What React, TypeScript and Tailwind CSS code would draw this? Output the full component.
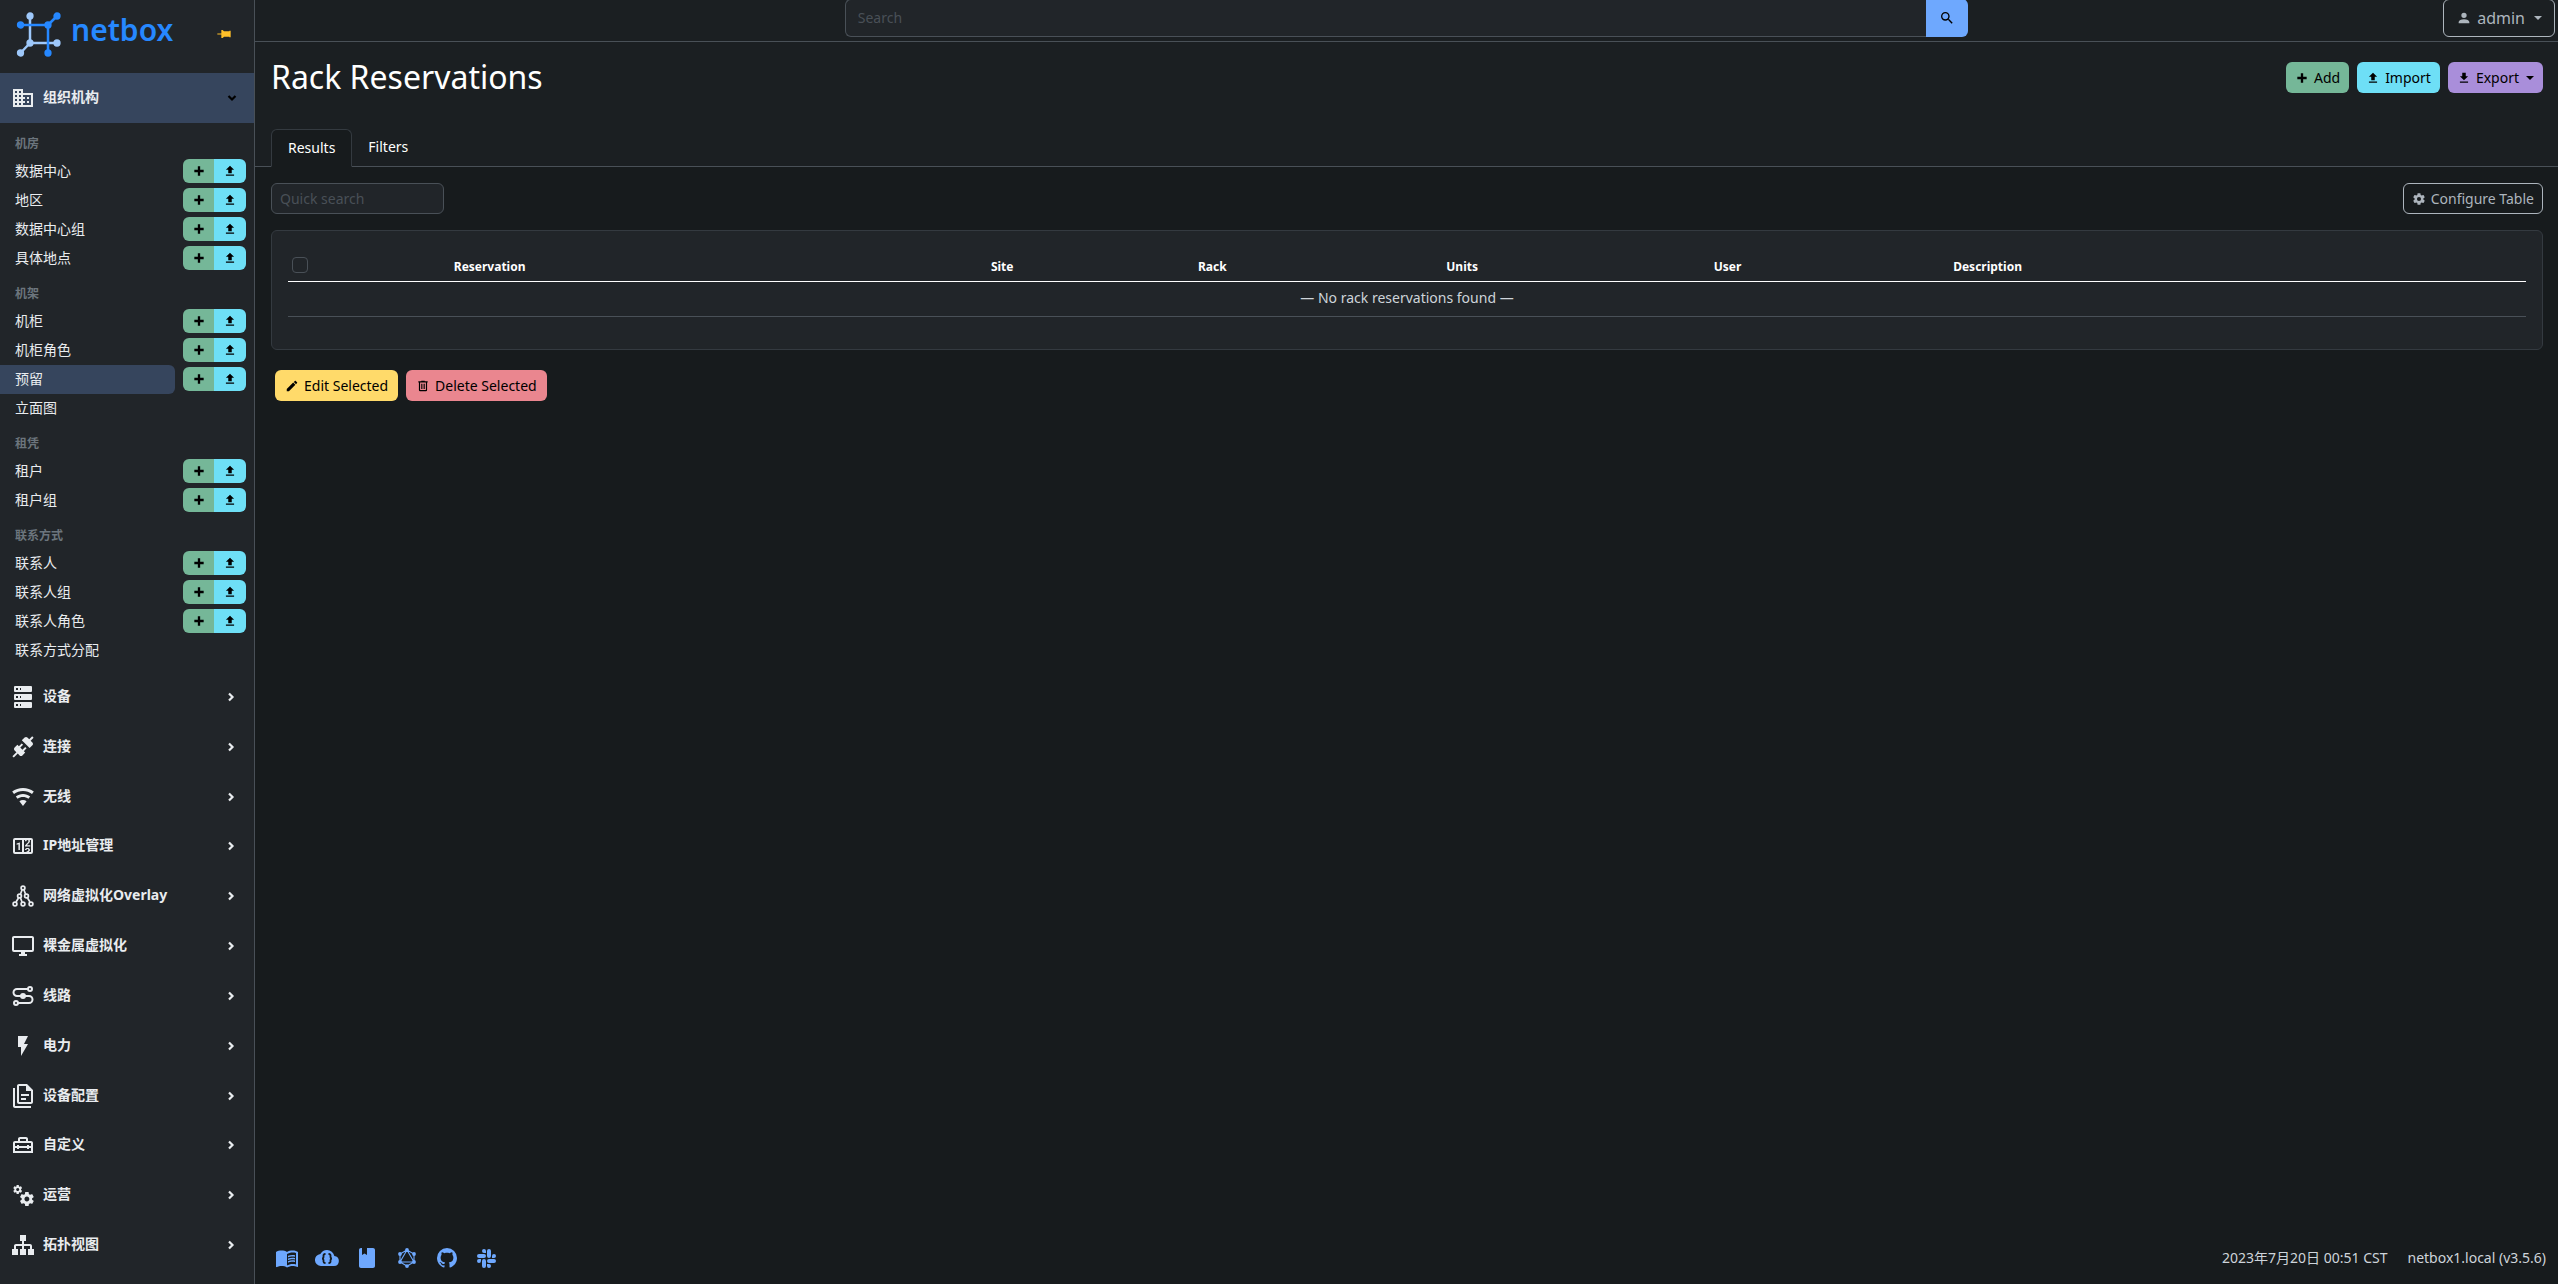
import React from 'react';
import { MdMenuBook } from 'react-icons/md';

const PATHS = {
  plus: 'M20 14H14V20H10V14H4V10H10V4H14V10H20V14Z',
  upload: 'M9,16V10H5L12,3L19,10H15V16H9M5,20V18H19V20H5Z',
  download: 'M5,20H19V18H5M19,9H15V3H9V9H5L12,16L19,9Z',
  account:
    'M12,4A4,4 0 0,1 16,8A4,4 0 0,1 12,12A4,4 0 0,1 8,8A4,4 0 0,1 12,4M12,14C16.42,14 20,15.79 20,18V20H4V18C4,15.79 7.58,14 12,14Z',
  magnify:
    'M9.5,3A6.5,6.5 0 0,1 16,9.5C16,11.11 15.41,12.59 14.44,13.73L14.71,14H15.5L20.5,19L19,20.5L14,15.5V14.71L13.73,14.44C12.59,15.41 11.11,16 9.5,16A6.5,6.5 0 0,1 3,9.5A6.5,6.5 0 0,1 9.5,3M9.5,5C7,5 5,7 5,9.5C5,12 7,14 9.5,14C12,14 14,12 14,9.5C14,7 12,5 9.5,5Z',
  cog: 'M12,15.5A3.5,3.5 0 0,1 8.5,12A3.5,3.5 0 0,1 12,8.5A3.5,3.5 0 0,1 15.5,12A3.5,3.5 0 0,1 12,15.5M19.43,12.97C19.47,12.65 19.5,12.33 19.5,12C19.5,11.67 19.47,11.34 19.43,11L21.54,9.37C21.73,9.22 21.78,8.95 21.66,8.73L19.66,5.27C19.54,5.05 19.27,4.96 19.05,5.05L16.56,6.05C16.04,5.66 15.5,5.32 14.87,5.07L14.5,2.42C14.46,2.18 14.25,2 14,2H10C9.75,2 9.54,2.18 9.5,2.42L9.13,5.07C8.5,5.32 7.96,5.66 7.44,6.05L4.95,5.05C4.73,4.96 4.46,5.05 4.34,5.27L2.34,8.73C2.21,8.95 2.27,9.22 2.46,9.37L4.57,11C4.53,11.34 4.5,11.67 4.5,12C4.5,12.33 4.53,12.65 4.57,12.97L2.46,14.63C2.27,14.78 2.21,15.05 2.34,15.27L4.34,18.73C4.46,18.95 4.73,19.03 4.95,18.95L7.44,17.94C7.96,18.34 8.5,18.68 9.13,18.93L9.5,21.58C9.54,21.82 9.75,22 10,22H14C14.25,22 14.46,21.82 14.5,21.58L14.87,18.93C15.5,18.67 16.04,18.34 16.56,17.94L19.05,18.95C19.27,19.03 19.54,18.95 19.66,18.73L21.66,15.27C21.78,15.05 21.73,14.78 21.54,14.63L19.43,12.97Z',
  pencil:
    'M20.71,7.04C21.1,6.65 21.1,6 20.71,5.63L18.37,3.29C18,2.9 17.35,2.9 16.96,3.29L15.12,5.12L18.87,8.87M3,17.25V21H6.75L17.81,9.93L14.06,6.18L3,17.25Z',
  trash:
    'M9,3V4H4V6H5V19A2,2 0 0,0 7,21H17A2,2 0 0,0 19,19V6H20V4H15V3H9M7,6H17V19H7V6M9,8V17H11V8H9M13,8V17H15V8H13Z',
  pin: 'M16,12V4H17V2H7V4H8V12L6,14V16H11.2V22H12.8V16H18V14L16,12Z',
  domain:
    'M18,15H16V17H18M18,11H16V13H18M20,19H12V17H14V15H12V13H14V11H12V9H20M10,7H8V5H10M10,11H8V9H10M10,15H8V13H10M10,19H8V17H10M6,7H4V5H6M6,11H4V9H6M6,15H4V13H6M6,19H4V17H6M12,7V3H2V21H22V7H12Z',
  server:
    'M4,1H20A1,1 0 0,1 21,2V6A1,1 0 0,1 20,7H4A1,1 0 0,1 3,6V2A1,1 0 0,1 4,1M4,9H20A1,1 0 0,1 21,10V14A1,1 0 0,1 20,15H4A1,1 0 0,1 3,14V10A1,1 0 0,1 4,9M4,17H20A1,1 0 0,1 21,18V22A1,1 0 0,1 20,23H4A1,1 0 0,1 3,22V18A1,1 0 0,1 4,17M9,5H10V3H9V5M9,13H10V11H9V13M9,21H10V19H9V21M5,3V5H7V3H5M5,11V13H7V11H5M5,19V21H7V19H5Z',
  connection:
    'M21.4 7.5C22.2 8.3 22.2 9.6 21.4 10.3L18.6 13.1L10.8 5.3L13.6 2.5C14.4 1.7 15.7 1.7 16.4 2.5L18.2 4.3L21.2 1.3L22.6 2.7L19.6 5.7L21.4 7.5M15.6 13.3L14.2 11.9L11.4 14.7L9.3 12.6L12.1 9.8L10.7 8.4L7.9 11.2L6.4 9.8L3.6 12.6C2.8 13.4 2.8 14.7 3.6 15.4L5.4 17.2L1.4 21.2L2.8 22.6L6.8 18.6L8.6 20.4C9.4 21.2 10.7 21.2 11.4 20.4L14.2 17.6L12.8 16.2L15.6 13.3Z',
  wifi: 'M12,21L15.6,16.2C14.6,15.45 13.35,15 12,15C10.65,15 9.4,15.45 8.4,16.2L12,21M12,3C7.95,3 4.21,4.34 1.2,6.6L3,9C5.5,7.12 8.62,6 12,6C15.38,6 18.5,7.12 21,9L22.8,6.6C19.79,4.34 16.05,3 12,3M12,9C9.3,9 6.81,9.89 4.8,11.4L6.6,13.8C8.1,12.67 9.97,12 12,12C14.03,12 15.9,12.67 17.4,13.8L19.2,11.4C17.19,9.89 14.7,9 12,9Z',
  counter:
    'M4,4H20A2,2 0 0,1 22,6V18A2,2 0 0,1 20,20H4A2,2 0 0,1 2,18V6A2,2 0 0,1 4,4M4,6V18H11V6H4M20,18V6H18.76C19,6.54 18.95,7.07 18.95,7.13C18.88,7.8 18.41,8.5 18.24,8.75L15.91,11.3L19.23,11.28L19.24,12.5L14.04,12.47L14,11.47C14,11.47 17.05,8.24 17.2,7.95C17.34,7.67 17.91,6 16.5,6C15.27,6.05 15.41,7.3 15.41,7.3L13.87,7.31C13.87,7.31 13.88,6.65 14.25,6H13V18H15.58L15.57,17.14L16.54,17.13C16.54,17.13 17.45,16.97 17.46,16.08C17.5,15.08 16.65,15.08 16.5,15.08C16.37,15.08 15.43,15.13 15.43,15.95H13.91C13.91,15.95 13.95,13.89 16.5,13.89C19.1,13.89 18.96,15.91 18.96,15.91C18.96,15.91 19,17.16 17.85,17.63L18.37,18H20M8.92,16H7.42V10.2L5.62,10.76V9.53L8.76,8.41H8.92V16Z',
  monitor:
    'M21,16H3V4H21M21,2H3C1.89,2 1,2.89 1,4V16A2,2 0 0,0 3,18H10V20H8V22H16V20H14V18H21A2,2 0 0,0 23,16V4C23,2.89 22.1,2 21,2Z',
  flash: 'M7,2V13H10V22L17,10H13L17,2H7Z',
  documents:
    'M16,0H8C6.9,0 6,0.9 6,2V18C6,19.1 6.9,20 8,20H20C21.1,20 22,19.1 22,18V6L16,0M20,18H8V2H15V7H20V18M4,4V22H20V24H4C2.9,24 2,23.1 2,22V4H4M10,10V12H18V10H10M10,14V16H15V14H10Z',
  toolbox:
    'M20,8H17V6C17,4.9 16.1,4 15,4H9C7.9,4 7,4.9 7,6V8H4C2.9,8 2,8.9 2,10V20H22V10C22,8.9 21.1,8 20,8M9,6H15V8H9V6M20,18H4V15H6V16H8V15H16V16H18V15H20V18M18,13V12H16V13H8V12H6V13H4V10H20V13H18Z',
  cogs: 'M15.9,18.45C17.25,18.45 18.35,17.35 18.35,16C18.35,14.65 17.25,13.55 15.9,13.55C14.54,13.55 13.45,14.65 13.45,16C13.45,17.35 14.54,18.45 15.9,18.45M21.1,16.68L22.58,17.84C22.71,17.95 22.75,18.13 22.66,18.29L21.26,20.71C21.17,20.86 21,20.92 20.83,20.86L19.09,20.16C18.73,20.44 18.33,20.67 17.91,20.85L17.64,22.7C17.62,22.87 17.47,23 17.3,23H14.5C14.32,23 14.18,22.87 14.15,22.7L13.89,20.85C13.46,20.67 13.07,20.44 12.71,20.16L10.96,20.86C10.81,20.92 10.62,20.86 10.54,20.71L9.14,18.29C9.05,18.13 9.09,17.95 9.22,17.84L10.7,16.68L10.65,16L10.7,15.31L9.22,14.16C9.09,14.05 9.05,13.86 9.14,13.71L10.54,11.29C10.62,11.13 10.81,11.07 10.96,11.13L12.71,11.84C13.07,11.56 13.46,11.32 13.89,11.15L14.15,9.29C14.18,9.13 14.32,9 14.5,9H17.3C17.47,9 17.62,9.13 17.64,9.29L17.91,11.15C18.33,11.32 18.73,11.56 19.09,11.84L20.83,11.13C21,11.07 21.17,11.13 21.26,11.29L22.66,13.71C22.75,13.86 22.71,14.05 22.58,14.16L21.1,15.31L21.15,16L21.1,16.68M6.69,8.07C7.56,8.07 8.26,7.37 8.26,6.5C8.26,5.63 7.56,4.92 6.69,4.92A1.58,1.58 0 0,0 5.11,6.5C5.11,7.37 5.82,8.07 6.69,8.07M10.03,6.94L11,7.68C11.07,7.75 11.09,7.87 11.03,7.97L10.13,9.53C10.08,9.63 9.96,9.67 9.86,9.63L8.74,9.18L8,9.62L7.81,10.81C7.79,10.92 7.7,11 7.59,11H5.79C5.67,11 5.58,10.92 5.56,10.81L5.4,9.62L4.64,9.18L3.52,9.63C3.41,9.67 3.3,9.63 3.24,9.53L2.34,7.97C2.28,7.87 2.31,7.75 2.39,7.68L3.34,6.94L3.31,6.5L3.34,6.06L2.39,5.32C2.31,5.25 2.28,5.13 2.34,5.03L3.24,3.47C3.3,3.37 3.41,3.33 3.52,3.37L4.63,3.82L5.4,3.38L5.56,2.19C5.58,2.08 5.67,2 5.79,2H7.59C7.7,2 7.79,2.08 7.81,2.19L8,3.38L8.74,3.82L9.86,3.37C9.96,3.33 10.08,3.37 10.13,3.47L11.03,5.03C11.09,5.13 11.07,5.25 11,5.32L10.03,6.06L10.06,6.5L10.03,6.94Z',
  sitemap:
    'M9,2V8H11V11H5C3.89,11 3,11.89 3,13V16H1V22H7V16H5V13H11V16H9V22H15V16H13V13H19V16H17V22H23V16H21V13C21,11.89 20.11,11 19,11H13V8H15V2H9Z',
  book: 'M6,2C4.9,2 4,2.9 4,4V20C4,21.1 4.9,22 6,22H18C19.1,22 20,21.1 20,20V4C20,2.9 19.1,2 18,2H12V9L9.5,7.5L7,9V2H6Z',
  github:
    'M12,2A10,10 0 0,0 2,12C2,16.42 4.87,20.17 8.84,21.5C9.34,21.58 9.5,21.27 9.5,21C9.5,20.77 9.5,20.14 9.5,19.31C6.73,19.91 6.14,17.97 6.14,17.97C5.68,16.81 5.03,16.5 5.03,16.5C4.12,15.88 5.1,15.9 5.1,15.9C6.1,15.97 6.63,16.93 6.63,16.93C7.5,18.45 8.97,18 9.54,17.76C9.63,17.11 9.89,16.67 10.17,16.42C7.95,16.17 5.62,15.31 5.62,11.5C5.62,10.39 6,9.5 6.65,8.79C6.55,8.54 6.2,7.5 6.75,6.15C6.75,6.15 7.59,5.88 9.5,7.17C10.29,6.95 11.15,6.84 12,6.84C12.85,6.84 13.71,6.95 14.5,7.17C16.41,5.88 17.25,6.15 17.25,6.15C17.8,7.5 17.45,8.54 17.35,8.79C18,9.5 18.38,10.39 18.38,11.5C18.38,15.32 16.04,16.16 13.81,16.41C14.17,16.72 14.5,17.33 14.5,18.26C14.5,19.6 14.5,20.68 14.5,21C14.5,21.27 14.66,21.59 15.17,21.5C19.14,20.16 22,16.42 22,12A10,10 0 0,0 12,2Z',
  slack:
    'M6,15A2,2 0 0,1 4,17A2,2 0 0,1 2,15A2,2 0 0,1 4,13H6V15M7,15A2,2 0 0,1 9,13A2,2 0 0,1 11,15V20A2,2 0 0,1 9,22A2,2 0 0,1 7,20V15M9,7A2,2 0 0,1 7,5A2,2 0 0,1 9,3A2,2 0 0,1 11,5V7H9M9,8A2,2 0 0,1 11,10A2,2 0 0,1 9,12H4A2,2 0 0,1 2,10A2,2 0 0,1 4,8H9M17,10A2,2 0 0,1 19,8A2,2 0 0,1 21,10A2,2 0 0,1 19,12H17V10M16,10A2,2 0 0,1 14,12A2,2 0 0,1 12,10V5A2,2 0 0,1 14,3A2,2 0 0,1 16,5V10M14,18A2,2 0 0,1 16,20A2,2 0 0,1 14,22A2,2 0 0,1 12,20V18H14M14,17A2,2 0 0,1 12,15A2,2 0 0,1 14,13H19A2,2 0 0,1 21,15A2,2 0 0,1 19,17H14Z',
};

type IconName = keyof typeof PATHS;

function Icon({ name, className }: { name: IconName; className: string }) {
  return (
    <svg viewBox="0 0 24 24" fill="currentColor" fillRule="evenodd" className={className} aria-hidden="true">
      <path d={PATHS[name]} />
    </svg>
  );
}

function GraphIcon() {
  return (
    <svg viewBox="0 0 24 24" fill="none" stroke="currentColor" strokeWidth="1.7" className="w-6 h-6" aria-hidden="true">
      <circle cx="12" cy="4" r="1.9" />
      <circle cx="8.5" cy="12" r="1.9" />
      <circle cx="15.5" cy="12" r="1.9" />
      <circle cx="4" cy="20" r="1.9" />
      <circle cx="12" cy="20" r="1.9" />
      <circle cx="20" cy="20" r="1.9" />
      <path d="M11 6L9.500 10M13 6l1.500 4M7.500 14l-2.500 4M9.500 14l1.500 4M16.500 14l2.500 4" />
    </svg>
  );
}

function CircuitIcon() {
  return (
    <svg viewBox="0 0 24 24" fill="none" stroke="currentColor" strokeWidth="2" className="w-6 h-6" aria-hidden="true">
      <circle cx="19" cy="5" r="2" />
      <circle cx="5" cy="19" r="2" />
      <path d="M17 5H6a3.5 3.5 0 0 0 0 7h12a3.5 3.5 0 0 1 0 7H7" />
      <circle cx="12" cy="12" r="3" fill="currentColor" stroke="none" />
    </svg>
  );
}

function CloudBracesIcon() {
  return (
    <svg viewBox="0 0 24 24" className="w-6 h-6" aria-hidden="true">
      <path
        fill="currentColor"
        d="M19.35 10.03A7.49 7.49 0 0 0 12 4C9.11 4 6.6 5.64 5.35 8.03A6 6 0 0 0 6 20h13a5 5 0 0 0 .35-9.97Z"
      />
      <path
        fill="none"
        stroke="#171b1d"
        strokeWidth="1.8"
        d="M10.500 8H10a1.500 1.500 0 0 0-1.500 1.500v1.500a1.500 1.500 0 0 1-1.500 1.500a1.500 1.500 0 0 1 1.500 1.500v1.500A1.500 1.500 0 0 0 10 17h.5M13.500 8h.5a1.500 1.500 0 0 1 1.500 1.500v1.500a1.500 1.500 0 0 0 1.500 1.500a1.500 1.500 0 0 0-1.500 1.500v1.500A1.500 1.500 0 0 1 14 17h-.5"
      />
    </svg>
  );
}

function GraphqlIcon() {
  return (
    <svg viewBox="0 0 24 24" fill="currentColor" className="w-6 h-6" aria-hidden="true">
      <path d="M12 4l7 4v8l-7 4l-7-4V8ZM12 4L5 16h14Z" fill="none" stroke="currentColor" strokeWidth="1.1" />
      <circle cx="12" cy="3.900" r="1.900" />
      <circle cx="19" cy="8" r="1.900" />
      <circle cx="19" cy="16" r="1.900" />
      <circle cx="12" cy="20.100" r="1.900" />
      <circle cx="5" cy="16" r="1.900" />
      <circle cx="5" cy="8" r="1.900" />
    </svg>
  );
}

function Chevron({ open }: { open?: boolean }) {
  return (
    <svg
      viewBox="0 0 16 16"
      fill="none"
      stroke="currentColor"
      strokeWidth="2.2"
      className={open ? 'w-4 h-4 rotate-90 text-black' : 'w-4 h-4'}
      aria-hidden="true"
    >
      <path d="M6 4.500L9.500 8L6 11.500" />
    </svg>
  );
}

function Caret() {
  return (
    <svg viewBox="0 0 8 4" fill="currentColor" className="w-2 h-1" aria-hidden="true">
      <path d="M0 0H8L4 4Z" />
    </svg>
  );
}

function Logo() {
  return (
    <a href="#home" className="flex items-center gap-[9px] text-[#2688ff]">
      <svg viewBox="0 0 46 46" className="w-[46px] h-[46px]" fill="none" strokeWidth="2.5" aria-hidden="true">
        <g stroke="#9ec8fa" fill="#9ec8fa">
          <path d="M14 5V32H41M14 32L4.500 42" fill="none" />
          <circle cx="14" cy="5" r="2.400" />
          <circle cx="41" cy="32" r="2.400" />
          <circle cx="4.500" cy="42" r="2.400" />
          <circle cx="14" cy="32" r="2.400" />
        </g>
        <g stroke="#2688ff" fill="#2688ff">
          <path d="M4.500 14H32V42M32 14L41 5" fill="none" />
          <circle cx="4.500" cy="14" r="2.400" />
          <circle cx="32" cy="14" r="2.400" />
          <circle cx="41" cy="5" r="2.400" />
          <circle cx="32" cy="42" r="2.400" />
        </g>
      </svg>
      <span className="text-[30px] leading-8 font-semibold pb-2">netbox</span>
    </a>
  );
}

type Link = { label: string; actions?: boolean; active?: boolean };

const GROUPS: { title: string; links: Link[] }[] = [
  {
    title: '机房',
    links: [
      { label: '数据中心', actions: true },
      { label: '地区', actions: true },
      { label: '数据中心组', actions: true },
      { label: '具体地点', actions: true },
    ],
  },
  {
    title: '机架',
    links: [
      { label: '机柜', actions: true },
      { label: '机柜角色', actions: true },
      { label: '预留', actions: true, active: true },
      { label: '立面图' },
    ],
  },
  {
    title: '租凭',
    links: [
      { label: '租户', actions: true },
      { label: '租户组', actions: true },
    ],
  },
  {
    title: '联系方式',
    links: [
      { label: '联系人', actions: true },
      { label: '联系人组', actions: true },
      { label: '联系人角色', actions: true },
      { label: '联系方式分配' },
    ],
  },
];

const MENUS: { label: string; icon: React.ReactNode }[] = [
  { label: '设备', icon: <Icon name="server" className="w-6 h-6" /> },
  { label: '连接', icon: <Icon name="connection" className="w-6 h-6" /> },
  { label: '无线', icon: <Icon name="wifi" className="w-6 h-6" /> },
  { label: 'IP地址管理', icon: <Icon name="counter" className="w-6 h-6" /> },
  { label: '网络虚拟化Overlay', icon: <GraphIcon /> },
  { label: '裸金属虚拟化', icon: <Icon name="monitor" className="w-6 h-6" /> },
  { label: '线路', icon: <CircuitIcon /> },
  { label: '电力', icon: <Icon name="flash" className="w-6 h-6" /> },
  { label: '设备配置', icon: <Icon name="documents" className="w-6 h-6" /> },
  { label: '自定义', icon: <Icon name="toolbox" className="w-6 h-6" /> },
  { label: '运营', icon: <Icon name="cogs" className="w-6 h-6" /> },
  { label: '拓扑视图', icon: <Icon name="sitemap" className="w-6 h-6" /> },
];

function SidebarLink({ label, actions, active }: Link) {
  return (
    <li className="flex h-[29px] items-start pr-2">
      <a
        href="#link"
        className={
          active
            ? 'w-[175px] h-[29px] pl-[15px] leading-[27px] rounded-r-md bg-[#36455d]'
            : 'w-[175px] h-[29px] pl-[15px] leading-[27px]'
        }
      >
        {label}
      </a>
      {actions && (
        <div className="ml-auto mt-0.5 flex h-6 rounded-md overflow-hidden text-black">
          <button type="button" aria-label={`Add ${label}`} className="w-[31px] flex items-center justify-center bg-[#75b798]">
            <Icon name="plus" className="w-[14px] h-[14px]" />
          </button>
          <button type="button" aria-label={`Import ${label}`} className="w-8 flex items-center justify-center bg-[#6edff6]">
            <Icon name="upload" className="w-[14px] h-[14px]" />
          </button>
        </div>
      )}
    </li>
  );
}

function Sidebar() {
  return (
    <nav className="w-[255px] shrink-0 flex flex-col bg-[#212529] border-r border-[#495057] text-[#e9ecef] text-sm">
      <div className="h-[73px] pl-4 pr-[22px] flex items-start justify-between pt-[11px]">
        <Logo />
        <button type="button" aria-label="Pin sidebar" className="mt-[15px] text-[#ffc029]">
          <Icon name="pin" className="w-4 h-4 rotate-90" />
        </button>
      </div>
      <button type="button" className="h-[50px] flex items-center pl-[11px] pr-[14px] bg-[#36455d] font-bold">
        <Icon name="domain" className="w-6 h-6" />
        <span className="ml-2 pb-0.5">组织机构</span>
        <span className="ml-auto">
          <Chevron open />
        </span>
      </button>
      {GROUPS.map((group) => (
        <section key={group.title}>
          <h6 className="h-[34px] pt-3 pl-[15px] text-xs leading-[18px] font-bold text-[#6c757d]">{group.title}</h6>
          <ul>
            {group.links.map((link) => (
              <SidebarLink key={link.label} {...link} />
            ))}
          </ul>
        </section>
      ))}
      <ul className="flex-1 grid auto-rows-fr pt-[7px] pb-[14px]">
        {MENUS.map((menu) => (
          <li key={menu.label} className="flex">
            <button type="button" className="flex-1 flex items-center pl-[11px] pr-[15px] font-bold">
              {menu.icon}
              <span className="ml-2 pb-0.5">{menu.label}</span>
              <span className="ml-auto">
                <Chevron />
              </span>
            </button>
          </li>
        ))}
      </ul>
    </nav>
  );
}

function TopBar() {
  return (
    <div className="h-[42px] grid grid-cols-4 items-start bg-[#1b1f22] border-b border-[#495057]">
      <form className="col-start-2 col-span-2 px-[14px] -mt-px flex h-[38px]">
        <input
          type="text"
          aria-label="Search"
          placeholder="Search"
          className="flex-1 min-w-0 px-3 rounded-l-md bg-[#212529] border border-[#495057] border-r-0 text-sm text-white placeholder:text-[#495057]"
        />
        <button type="button" aria-label="Submit search" className="w-[42px] flex items-center justify-center rounded-r-md bg-[#6ea8fe] text-black">
          <Icon name="magnify" className="w-4 h-4" />
        </button>
      </form>
      <div className="flex justify-end pr-[3px] -mt-px">
        <button
          type="button"
          className="h-[38px] px-3 flex items-center border border-[#adb5bd] rounded-md text-base text-[#adb5bd]"
        >
          <Icon name="account" className="w-4 h-4" />
          <span className="ml-[5px] mr-[9px]">admin</span>
          <Caret />
        </button>
      </div>
    </div>
  );
}

function PageHeader() {
  return (
    <header className="h-[125px] flex flex-col justify-between bg-[#1b1f22] border-b border-[#495057] pl-4 pr-[15px]">
      <div className="flex items-start justify-between pt-[14px]">
        <h1 className="text-[32px] leading-[42px] text-white">Rack Reservations</h1>
        <div className="flex gap-2 pt-[6px] text-sm text-black">
          <button type="button" className="h-[31px] px-[9px] flex items-center gap-[5px] rounded-md bg-[#75b798]">
            <Icon name="plus" className="w-[14px] h-[14px]" /> Add
          </button>
          <button type="button" className="h-[31px] px-[9px] flex items-center gap-[5px] rounded-md bg-[#6edff6]">
            <Icon name="upload" className="w-[14px] h-[14px]" /> Import
          </button>
          <button type="button" className="h-[31px] px-[9px] flex items-center gap-[5px] rounded-md bg-[#a98eda]">
            <Icon name="download" className="w-[14px] h-[14px]" /> Export
            <span className="ml-0.5">
              <Caret />
            </span>
          </button>
        </div>
      </div>
      <div role="tablist" className="flex text-sm text-white -mb-px">
        <button
          type="button"
          role="tab"
          aria-selected="true"
          className="h-[38px] px-4 rounded-t-md bg-[#171b1d] border border-[#343a40] border-b-[#171b1d]"
        >
          Results
        </button>
        <button type="button" role="tab" aria-selected="false" className="h-9 px-4">
          Filters
        </button>
      </div>
    </header>
  );
}

function ReservationTable() {
  return (
    <div className="mt-4 h-[120px] rounded-md bg-[#212529] border border-[#343a40] px-4 pt-[15px]">
      <table className="w-full table-fixed">
        <thead>
          <tr className="h-[35px] border-b border-white text-left text-xs text-white">
            <th className="w-[7.05%] pl-1">
              <input
                type="checkbox"
                aria-label="Select all"
                className="block appearance-none w-4 h-4 mt-1 rounded border border-[#495057]"
              />
            </th>
            <th className="w-[24%] pt-2 pl-2">Reservation</th>
            <th className="w-[9.25%] pt-2 pl-2">Site</th>
            <th className="w-[11.1%] pt-2 pl-2">Rack</th>
            <th className="w-[11.95%] pt-2 pl-2">Units</th>
            <th className="w-[10.7%] pt-2 pl-2">User</th>
            <th className="pt-2 pl-2">Description</th>
          </tr>
        </thead>
        <tbody>
          <tr className="h-[35px] border-b border-[#495057] text-center text-sm text-[#ced4da]">
            <td colSpan={7} className="pb-0.5">
              — No rack reservations found —
            </td>
          </tr>
        </tbody>
      </table>
    </div>
  );
}

function Footer() {
  return (
    <footer className="mt-auto h-[52px] flex items-center justify-between pl-5 pr-3 text-sm text-[#ced4da]">
      <div className="flex gap-4 text-[#6ea8fe]">
        <a href="#docs" aria-label="Docs">
          <MdMenuBook className="w-6 h-6" />
        </a>
        <a href="#api" aria-label="REST API">
          <CloudBracesIcon />
        </a>
        <a href="#api-docs" aria-label="REST API documentation">
          <Icon name="book" className="w-6 h-6" />
        </a>
        <a href="#graphql" aria-label="GraphQL API">
          <GraphqlIcon />
        </a>
        <a href="#source" aria-label="Source Code">
          <Icon name="github" className="w-6 h-6" />
        </a>
        <a href="#community" aria-label="Community">
          <Icon name="slack" className="w-6 h-6" />
        </a>
      </div>
      <div className="flex gap-5">
        <span>2023年7月20日 00:51 CST</span>
        <span>netbox1.local (v3.5.6)</span>
      </div>
    </footer>
  );
}

export default function App() {
  return (
    <div className="min-h-screen flex bg-[#171b1d] font-['Noto_Sans','Noto_Sans_CJK_SC',sans-serif]">
      <Sidebar />
      <div className="flex-1 min-w-0 flex flex-col">
        <TopBar />
        <PageHeader />
        <main className="pl-4 pr-[15px] pt-4">
          <div className="flex justify-between">
            <input
              type="text"
              aria-label="Quick search"
              placeholder="Quick search"
              className="w-[173px] h-[31px] px-2 rounded-md bg-[#212529] border border-[#495057] text-sm text-white placeholder:text-[#495057]"
            />
            <button
              type="button"
              className="h-[31px] px-2 flex items-center gap-[5px] rounded-md border border-[#adb5bd] text-sm text-[#adb5bd]"
            >
              <Icon name="cog" className="w-[14px] h-[14px]" /> Configure Table
            </button>
          </div>
          <ReservationTable />
          <div className="flex gap-2 pl-1 pt-5 text-sm text-black">
            <button type="button" className="h-[31px] px-[10px] flex items-center gap-[5px] rounded-md bg-[#ffda6a]">
              <Icon name="pencil" className="w-[14px] h-[14px]" /> Edit Selected
            </button>
            <button type="button" className="h-[31px] px-[10px] flex items-center gap-[5px] rounded-md bg-[#ea868f]">
              <Icon name="trash" className="w-[14px] h-[14px]" /> Delete Selected
            </button>
          </div>
        </main>
        <Footer />
      </div>
    </div>
  );
}
